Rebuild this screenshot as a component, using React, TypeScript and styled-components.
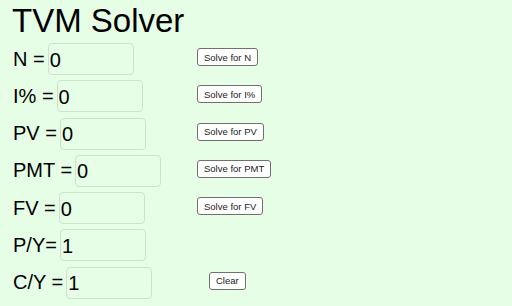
import styled, { createGlobalStyle } from "styled-components";

const GlobalStyle = createGlobalStyle`
    html, body {
        margin: 0;
        padding: 0;
        background: #e6fde6;
        font-family: "Liberation Sans", Arial, sans-serif;
    }
`;

const rows = [
    { label: "N =", value: "0", button: "Solve for N" },
    { label: "I% =", value: "0", button: "Solve for I%" },
    { label: "PV =", value: "0", button: "Solve for PV" },
    { label: "PMT =", value: "0", button: "Solve for PMT" },
    { label: "FV =", value: "0", button: "Solve for FV" },
    { label: "P/Y=", value: "1" },
    { label: "C/Y =", value: "1", button: "Clear", shift: 12 },
];

export default function App() {
    return (
        <Page>
            <GlobalStyle />
            <Title>TVM Solver</Title>
            <Form>
                {rows.map((r) => (
                    <Row key={r.label}>
                        <Field>
                            <Label>{r.label}</Label>
                            <Input defaultValue={r.value} />
                        </Field>
                        {r.button && <SolveButton $shift={r.shift || 0}>{r.button}</SolveButton>}
                    </Row>
                ))}
            </Form>
        </Page>
    );
}

const Page = styled.div`
    width: 512px;
    height: 306px;
    background: #e6fde6;
    overflow: hidden;
`;

const Title = styled.h1`
    margin: 0;
    padding: 2px 0 0 12px;
    font-size: 33px;
    font-weight: normal;
    line-height: 37px;
    color: #000;
`;

const Form = styled.div`
    display: flex;
    flex-direction: column;
    gap: 5.3px;
    padding-top: 4px;
`;

const Row = styled.div`
    display: grid;
    grid-template-columns: 197px auto;
    align-items: center;
    height: 32px;
`;

const Field = styled.div`
    display: flex;
    align-items: center;
    padding-left: 13px;
    gap: 3px;
`;

const Label = styled.span`
    font-size: 20px;
    color: #000;
    white-space: pre;
`;

const Input = styled.input`
    box-sizing: border-box;
    width: 86px;
    height: 32px;
    padding: 2px 1px 0;
    border: 1px solid #cfe0cf;
    border-radius: 4px;
    background: transparent;
    font-family: "Liberation Sans", Arial, sans-serif;
    font-size: 20px;
    color: #000;
    outline: none;
`;

const SolveButton = styled.button<{ $shift: number }>`
    justify-self: start;
    margin-left: ${(p) => p.$shift}px;
    margin-top: -4px;
    height: 18px;
    padding: 0 6px;
    background: #fff;
    border: 1px solid #707070;
    border-radius: 3px;
    font-family: "Liberation Sans", Arial, sans-serif;
    font-size: 9.5px;
    color: #222;
    cursor: pointer;
`;
